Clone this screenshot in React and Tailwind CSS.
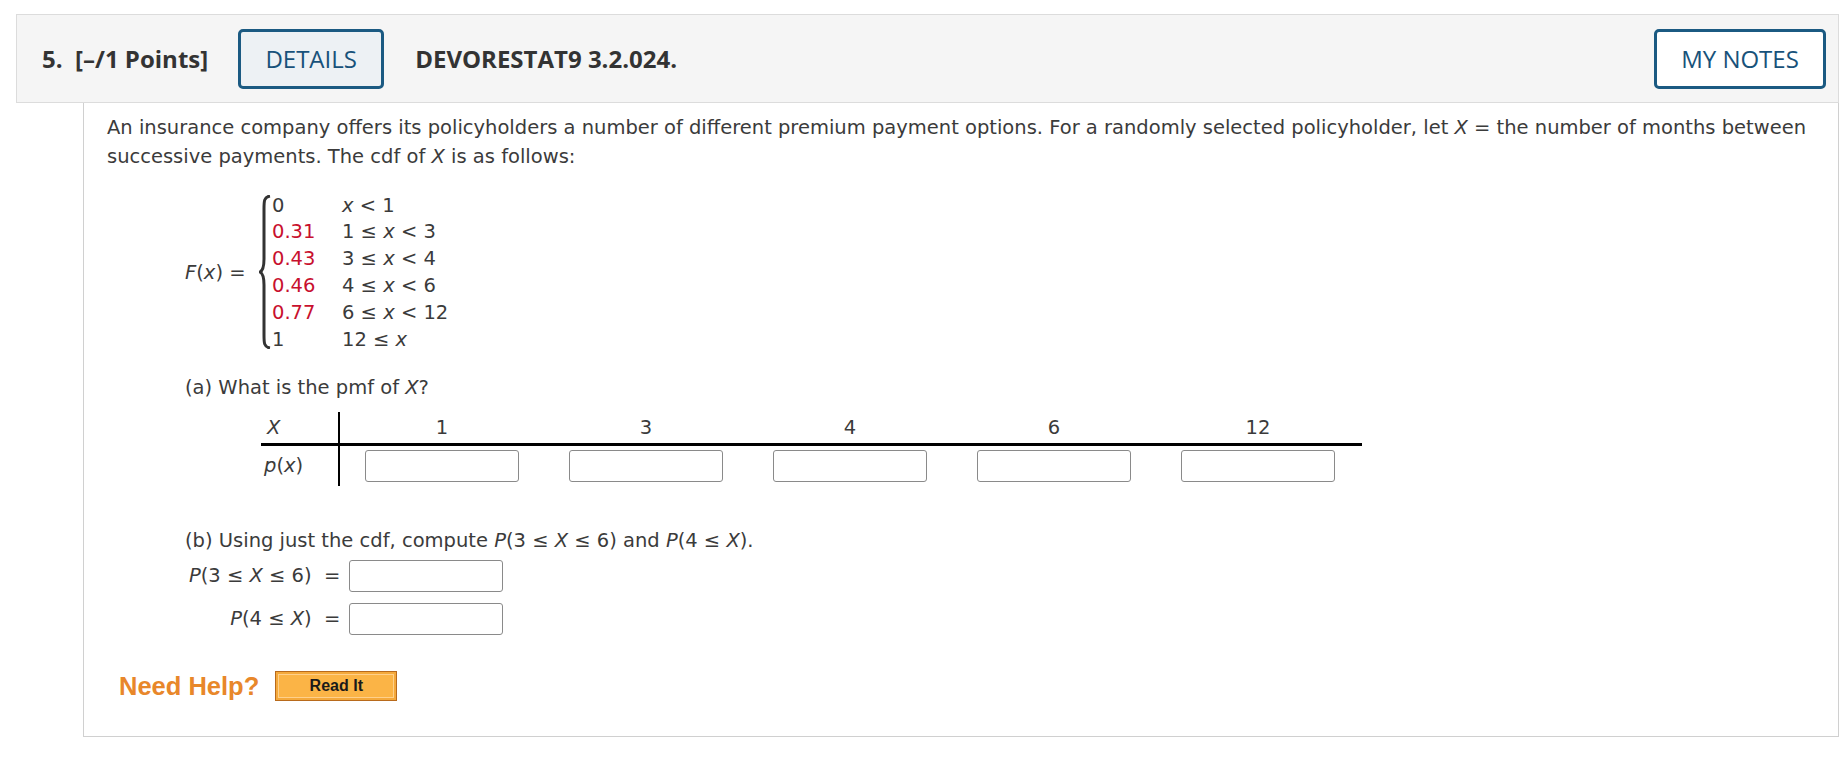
import React from "react";

const body = { fontFamily: '"DejaVu Sans", Verdana, sans-serif' };
const head = { fontFamily: '"Open Sans", Arial, sans-serif' };

const Brace = () => (
  <svg width="12" height="154" viewBox="0 0 12 154" className="block">
    <path
      d="M11 1 C5 2 5 6 5 14 L5 64 C5 72 3 76 1 77 C3 78 5 82 5 90 L5 140 C5 148 5 152 11 153"
      fill="none"
      stroke="#333"
      strokeWidth="3"
    />
  </svg>
);

const Box = ({ w = "w-[154px]" }) => (
  <div className={`${w} h-[32px] rounded-[3px] border border-[#8a8a8a] bg-white`} />
);

const cdf = [
  ["0", false, <><i>x</i> &lt; 1</>],
  ["0.31", true, <>1 ≤ <i>x</i> &lt; 3</>],
  ["0.43", true, <>3 ≤ <i>x</i> &lt; 4</>],
  ["0.46", true, <>4 ≤ <i>x</i> &lt; 6</>],
  ["0.77", true, <>6 ≤ <i>x</i> &lt; 12</>],
  ["1", false, <>12 ≤ <i>x</i></>],
];

const cols = ["1", "3", "4", "6", "12"];

export default function App() {
  return (
    <div className="w-[1843px] h-[763px] bg-white pt-[14px] pl-[16px]">
      <div className="w-[1823px]">
        {/* header */}
        <div
          className="h-[89px] border border-[#dcdcdc] bg-[#f5f5f5] flex items-center pl-[25px] pr-[12px] text-[#333]"
          style={head}
        >
          <span className="text-[24px] font-bold">5.&nbsp; [–/1 Points]</span>
          <div className="ml-[30px] w-[146px] h-[60px] rounded-[5px] border-[3px] border-[#1b5a82] bg-[#edf1f4] flex items-center justify-center text-[24px] text-[#18527a]">
            DETAILS
          </div>
          <span className="ml-[31px] text-[24px] font-bold">DEVORESTAT9 3.2.024.</span>
          <div className="ml-auto w-[172px] h-[60px] rounded-[5px] border-[3px] border-[#1b5a82] bg-white flex items-center justify-center text-[24px] font-medium text-[#18527a]">
            MY NOTES
          </div>
        </div>

        {/* content */}
        <div
          className="ml-[67px] h-[634px] border-l border-r border-b border-[#d0d0d0] pl-[23px] pt-[10px] text-[19.5px] text-[#3b3b3b]"
          style={body}
        >
          <p className="leading-[29px]">
            An insurance company offers its policyholders a number of different premium payment options. For a randomly selected policyholder, let <i>X</i> = the number of months between
            <br />
            successive payments. The cdf of <i>X</i> is as follows:
          </p>

          <div className="ml-[78px] mt-[21px] flex items-center">
            <span className="w-[74px]">
              <i>F</i>(<i>x</i>) =
            </span>
            <Brace />
            <div className="ml-[1px] flex flex-col">
              {cdf.map(([v, red, c], i) => (
                <div key={i} className="flex h-[26.8px] items-center leading-none">
                  <span className={`w-[70px] ${red ? "text-[#c8102e]" : ""}`}>{v}</span>
                  <span>{c}</span>
                </div>
              ))}
            </div>
          </div>

          <div className="ml-[78px] mt-[20px] leading-[29px]">
            (a) What is the pmf of <i>X</i>?
          </div>

          <div className="ml-[154px] mt-[10px] w-[1101px]">
            <div className="flex h-[34px] border-b-[3px] border-black">
              <div className="w-[79px] border-r-2 border-black flex items-center pl-[6px]">
                <i>X</i>
              </div>
              {cols.map((c) => (
                <div key={c} className="w-[204px] flex items-center justify-center">
                  {c}
                </div>
              ))}
            </div>
            <div className="flex h-[40px]">
              <div className="w-[79px] border-r-2 border-black flex items-center pl-[3px]">
                <i>p</i>(<i>x</i>)
              </div>
              {cols.map((c) => (
                <div key={c} className="w-[204px] flex items-center justify-center">
                  <Box />
                </div>
              ))}
            </div>
          </div>

          <div className="ml-[78px] mt-[40px] leading-[29px]">
            (b) Using just the cdf, compute <i>P</i>(3 ≤ <i>X</i> ≤ 6) and <i>P</i>(4 ≤ <i>X</i>).
          </div>

          <div className="ml-[82px] mt-[5px] grid grid-cols-[auto_auto] justify-start items-center gap-y-[11px]">
            <span className="text-right pr-[9px]">
              <i>P</i>(3 ≤ <i>X</i> ≤ 6) &nbsp;=
            </span>
            <Box />
            <span className="text-right pr-[9px]">
              <i>P</i>(4 ≤ <i>X</i>) &nbsp;=
            </span>
            <Box />
          </div>

          <div className="ml-[12px] mt-[32px] flex items-center" style={{ fontFamily: '"Liberation Sans", Arial, sans-serif' }}>
            <span className="text-[25.5px] font-bold text-[#e8872a]">Need Help?</span>
            <div className="ml-[16px] w-[122px] h-[30px] border border-[#b86a1c] bg-[#f4a93c] p-[2px]">
              <div className="h-full border border-[#ffd08a] bg-[#fbb446] flex items-center justify-center text-[16px] font-bold text-[#1a1a1a]">
                Read It
              </div>
            </div>
          </div>
        </div>
      </div>
    </div>
  );
}
